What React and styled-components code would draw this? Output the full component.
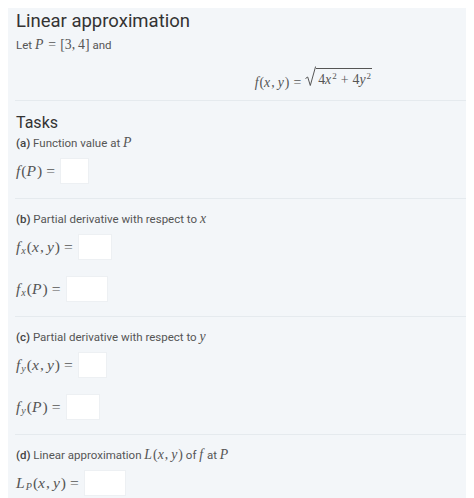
import React from 'react';
import styled, { createGlobalStyle } from 'styled-components';

const GlobalStyle = createGlobalStyle`
  body {
    margin: 8px;
    background: #ffffff;
    font-family: Roboto, "Liberation Sans", sans-serif;
  }
`;

const Panel = styled.div`
  background: #f3f6f9;
  width: 464px;
  min-height: 490px;
  padding-bottom: 20px;
`;

const Head = styled.div`
  padding: 0 8px;
  height: 92px;
`;

const Title = styled.h1`
  margin: 0;
  padding-top: 2px;
  font-size: 18.5px;
  line-height: 22px;
  font-weight: 400;
  color: #333;
`;

const Text = styled.p`
  margin: 0;
  font-size: 11.5px;
  line-height: 16px;
  color: #555;
  margin-top: ${(p) => p.$top || 0}px;
`;

const FormulaLine = styled.div`
  display: flex;
  justify-content: flex-end;
  padding-right: 92px;
  margin-top: 13px;
  font-size: 11.5px;
  color: #555;
`;

const Section = styled.div`
  border-top: 1px solid #e5eaee;
  margin-left: 7px;
  padding: 12px 0 14px 1px;
`;

const Heading = styled.h2`
  margin: 0 0 2px;
  font-size: 16px;
  line-height: 20px;
  font-weight: 400;
  color: #333;
`;

const Label = styled.div`
  font-size: 11.5px;
  line-height: 16px;
  color: #555;
  b {
    font-weight: 500;
    color: #444;
  }
`;

const Row = styled.div`
  display: flex;
  align-items: center;
  margin-top: ${(p) => p.$top}px;
  font-size: 13px;
  color: #555;
`;

const Box = styled.div`
  width: ${(p) => p.$w}px;
  height: 26px;
  background: #fff;
  border: 1px solid #edf0f3;
  box-sizing: border-box;
  margin-left: 1px;
`;

const M = styled.span`
  font-family: "Liberation Serif", "DejaVu Serif", serif;
  font-size: 1.2em;
  color: #555;
  white-space: nowrap;
`;

const V = styled.i`
  font-style: italic;
  margin-right: 1px;
`;

const Op = styled.span`
  margin: 0 4px;
`;

const Comma = styled.span`
  margin-right: 3px;
`;

const Sub = styled.sub`
  font-size: 0.65em;
  font-style: italic;
  vertical-align: -0.25em;
  margin-right: 1px;
`;

const Sup = styled.sup`
  font-size: 0.65em;
  vertical-align: 0.6em;
  line-height: 0;
`;

const Radical = styled.span`
  display: inline-flex;
  align-items: flex-end;
`;

const Radicand = styled.span`
  border-top: 1px solid #555;
  padding: 3px 1px 0 2px;
  line-height: 15px;
`;

const Sqrt = ({ children }) => (
  <Radical>
    <svg width="11" height="21" viewBox="0 0 11 21" style={{ display: 'block' }}>
      <path d="M0.5 12.5 L2.7 11 L5.3 19.5 L10.6 0.5" fill="none" stroke="#555" strokeWidth="1" />
    </svg>
    <Radicand>{children}</Radicand>
  </Radical>
);

const Part = ({ tag, children }) => (
  <Label>
    <b>{tag}</b> {children}
  </Label>
);

const XY = () => (
  <>
    (<V>x</V><Comma>,</Comma><V>y</V>)
  </>
);

export default function App() {
  return (
    <Panel>
      <GlobalStyle />
      <Head>
        <Title>Linear approximation</Title>
        <Text $top={5}>
          Let <M><V>P</V><Op>=</Op>[3<Comma>,</Comma>4]</M> and
        </Text>
        <FormulaLine>
          <M>
            <V>f</V><XY /><Op>=</Op>
            <Sqrt>
              4<V>x</V><Sup>2</Sup><Op>+</Op>4<V>y</V><Sup>2</Sup>
            </Sqrt>
          </M>
        </FormulaLine>
      </Head>

      <Section>
        <Heading>Tasks</Heading>
        <Part tag="(a)">
          Function value at <M><V>P</V></M>
        </Part>
        <Row $top={7}>
          <M><V>f</V>(<V>P</V>)<Op>=</Op></M>
          <Box $w={29} />
        </Row>
      </Section>

      <Section>
        <Part tag="(b)">
          Partial derivative with respect to <M><V>x</V></M>
        </Part>
        <Row $top={7}>
          <M><V>f</V><Sub>x</Sub><XY /><Op>=</Op></M>
          <Box $w={34} />
        </Row>
        <Row $top={16}>
          <M><V>f</V><Sub>x</Sub>(<V>P</V>)<Op>=</Op></M>
          <Box $w={42} />
        </Row>
      </Section>

      <Section>
        <Part tag="(c)">
          Partial derivative with respect to <M><V>y</V></M>
        </Part>
        <Row $top={7}>
          <M><V>f</V><Sub>y</Sub><XY /><Op>=</Op></M>
          <Box $w={29} />
        </Row>
        <Row $top={16}>
          <M><V>f</V><Sub>y</Sub>(<V>P</V>)<Op>=</Op></M>
          <Box $w={34} />
        </Row>
      </Section>

      <Section>
        <Part tag="(d)">
          Linear approximation <M><V>L</V><XY /></M> of <M><V>f</V></M> at <M><V>P</V></M>
        </Part>
        <Row $top={7}>
          <M><V>L</V><Sub>P</Sub><XY /><Op>=</Op></M>
          <Box $w={42} />
        </Row>
      </Section>
    </Panel>
  );
}
